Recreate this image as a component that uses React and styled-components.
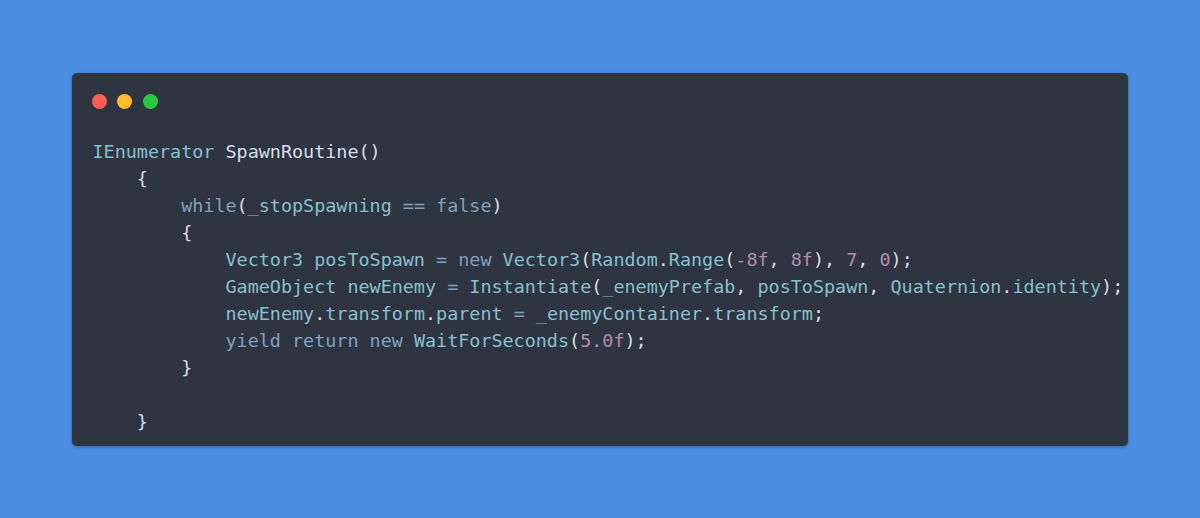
import React from 'react';
import styled, { createGlobalStyle } from 'styled-components';

const GlobalStyle = createGlobalStyle`
  html, body {
    margin: 0;
    padding: 0;
    background: #4a8fe2;
  }
`;

const Page = styled.div`
  box-sizing: border-box;
  width: 100%;
  height: 100vh;
  padding: 73px 72px 72px;
  background: #4a8fe2;
`;

const Window = styled.div`
  box-sizing: border-box;
  height: 100%;
  background: #2e3440;
  border-radius: 5px;
  box-shadow: 0 1px 3px rgba(0, 0, 0, 0.35);
  overflow: hidden;
`;

const TitleBar = styled.div`
  display: flex;
  gap: 10.5px;
  padding: 20.5px 0 0 19.5px;
`;

const Dot = styled.span`
  display: block;
  width: 15px;
  height: 15px;
  border-radius: 50%;
  background: ${(props) => props.colour};
`;

const Code = styled.pre`
  margin: 0;
  padding: 29px 20px 0 20.5px;
  font-family: 'DejaVu Sans Mono', 'Liberation Mono', monospace;
  font-size: 18.42px;
  line-height: 27.1px;
  color: #d8dee9;
`;

const Line = styled.div`
  height: 27.1px;
  white-space: pre;
`;

const colours = {
  p: '#d8dee9', // plain / punctuation
  t: '#88c0d0', // types, identifiers
  k: '#81a1c1', // keywords, operators
  n: '#b48ead', // numbers
};

const Token = styled.span`
  color: ${(props) => colours[props.kind]};
`;

// each line is a list of [kind, text]
const lines = [
  [['t', 'IEnumerator'], ['p', ' SpawnRoutine()']],
  [['p', '    {']],
  [
    ['p', '        '],
    ['k', 'while'],
    ['p', '('],
    ['t', '_stopSpawning'],
    ['p', ' '],
    ['k', '=='],
    ['p', ' '],
    ['k', 'false'],
    ['p', ')'],
  ],
  [['p', '        {']],
  [
    ['p', '            '],
    ['t', 'Vector3 posToSpawn'],
    ['p', ' '],
    ['k', '='],
    ['p', ' '],
    ['k', 'new'],
    ['p', ' '],
    ['t', 'Vector3'],
    ['p', '('],
    ['t', 'Random'],
    ['p', '.'],
    ['t', 'Range'],
    ['p', '('],
    ['n', '-8f'],
    ['p', ', '],
    ['n', '8f'],
    ['p', '), '],
    ['n', '7'],
    ['p', ', '],
    ['n', '0'],
    ['p', ');'],
  ],
  [
    ['p', '            '],
    ['t', 'GameObject newEnemy'],
    ['p', ' '],
    ['k', '='],
    ['p', ' '],
    ['t', 'Instantiate'],
    ['p', '('],
    ['t', '_enemyPrefab'],
    ['p', ', '],
    ['t', 'posToSpawn'],
    ['p', ', '],
    ['t', 'Quaternion'],
    ['p', '.'],
    ['t', 'identity'],
    ['p', ');'],
  ],
  [
    ['p', '            '],
    ['t', 'newEnemy'],
    ['p', '.'],
    ['t', 'transform'],
    ['p', '.'],
    ['t', 'parent'],
    ['p', ' '],
    ['k', '='],
    ['p', ' '],
    ['t', '_enemyContainer'],
    ['p', '.'],
    ['t', 'transform'],
    ['p', ';'],
  ],
  [
    ['p', '            '],
    ['k', 'yield return new'],
    ['p', ' '],
    ['t', 'WaitForSeconds'],
    ['p', '('],
    ['n', '5.0f'],
    ['p', ');'],
  ],
  [['p', '        }']],
  [['p', '']],
  [['p', '    }']],
];

const App = () => (
  <>
    <GlobalStyle />
    <Page>
      <Window>
        <TitleBar>
          <Dot colour="#ff5f56" />
          <Dot colour="#ffbd2e" />
          <Dot colour="#27c93f" />
        </TitleBar>
        <Code>
          {lines.map((line, i) => (
            <Line key={i}>
              {line.map(([kind, text], j) => (
                <Token key={j} kind={kind}>
                  {text}
                </Token>
              ))}
            </Line>
          ))}
        </Code>
      </Window>
    </Page>
  </>
);

export default App;
